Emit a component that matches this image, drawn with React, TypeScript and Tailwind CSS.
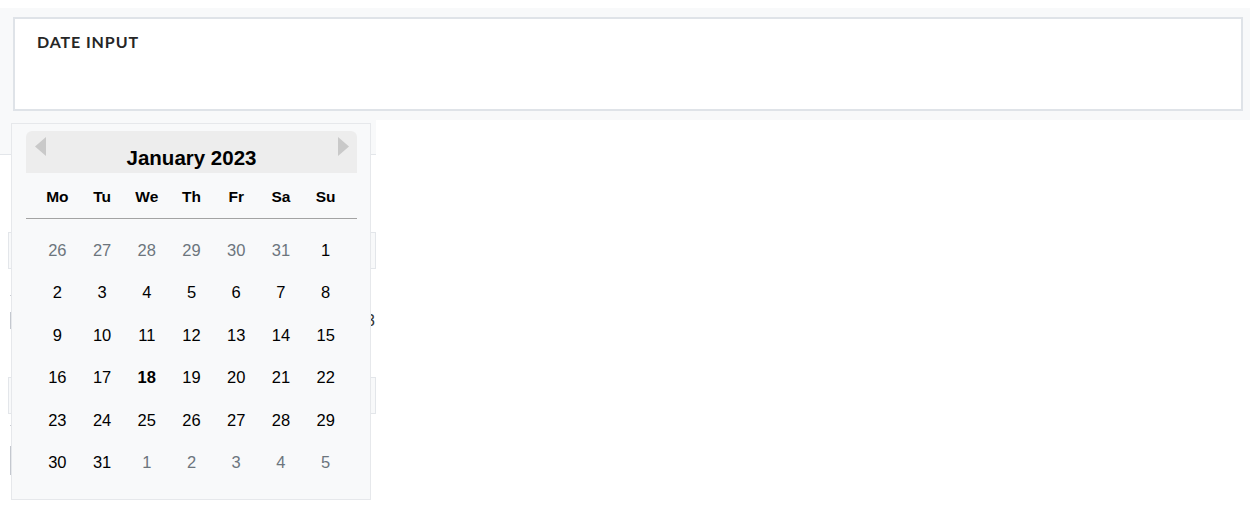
import React from "react";

const days: { d: number; muted?: boolean; today?: boolean }[] = [
  { d: 26, muted: true }, { d: 27, muted: true }, { d: 28, muted: true }, { d: 29, muted: true }, { d: 30, muted: true }, { d: 31, muted: true }, { d: 1 },
  { d: 2 }, { d: 3 }, { d: 4 }, { d: 5 }, { d: 6 }, { d: 7 }, { d: 8 },
  { d: 9 }, { d: 10 }, { d: 11 }, { d: 12 }, { d: 13 }, { d: 14 }, { d: 15 },
  { d: 16 }, { d: 17 }, { d: 18, today: true }, { d: 19 }, { d: 20 }, { d: 21 }, { d: 22 },
  { d: 23 }, { d: 24 }, { d: 25 }, { d: 26 }, { d: 27 }, { d: 28 }, { d: 29 },
  { d: 30 }, { d: 31 }, { d: 1, muted: true }, { d: 2, muted: true }, { d: 3, muted: true }, { d: 4, muted: true }, { d: 5, muted: true },
];

const weekdays = ["Mo", "Tu", "We", "Th", "Fr", "Sa", "Su"];

export default function App() {
  return (
    <div className="relative min-h-screen bg-white pt-2 font-['Liberation_Sans',Arial,sans-serif] text-black">
      {/* Top band */}
      <div className="bg-[#f8f9fa] pl-[13px] pr-[7px] py-[9px]">
        <div className="h-[94px] border-2 border-[#dfe3e8] bg-white pl-[22px] pt-[14px]">
          <h2 className="font-['Lato','Open_Sans',sans-serif] font-bold text-[16px] leading-[18px] tracking-[0.9px] text-[#262626]">
            DATE INPUT
          </h2>
        </div>
      </div>

      {/* Underlying content (mostly hidden by popup) */}
      <div className="w-[376px]">
        <div className="h-[35px] bg-[#f8f9fa] border-b border-[#e3e6ea]" />
        <div className="mt-[77px] ml-[8px] h-[37px] bg-[#f8f9fa] border border-[#e3e6ea]" />
        <div className="mt-[26px] ml-[10px] w-px h-[1px] bg-[#c8ccd2]" />
        <div className="mt-[16px] h-[17px] flex items-center justify-between pl-[10px] pr-[1px]">
          <div className="w-[2px] h-[17px] bg-[#c4c8cf]" />
          <span className="text-[16px] leading-[17px] text-[#333]">2023</span>
        </div>
        <div className="mt-[48px] ml-[8px] h-[37px] bg-[#f8f9fa] border border-[#e3e6ea]" />
        <div className="mt-[11px] ml-[10px] w-px h-[1px] bg-[#c8ccd2]" />
        <div className="mt-[20px] ml-[10px] w-[2px] h-[29px] bg-[#c4c8cf]" />
      </div>

      {/* Datepicker popup */}
      <div className="absolute left-[11px] top-[123px] w-[360px] h-[377px] border border-[#e6e8eb] bg-[#f8f9fa] pl-[14px] pr-[13px] pt-[7px]">
        <div className="relative h-[42px] bg-[#ededed] rounded-t-[6px]">
          <button className="absolute left-[9px] top-[6px]" aria-label="Previous month">
            <svg width="11" height="19" viewBox="0 0 11 19">
              <polygon points="11,0 11,19 0,9.5" fill="#c9c9c9" />
            </svg>
          </button>
          <button className="absolute right-[8px] top-[6px]" aria-label="Next month">
            <svg width="11" height="19" viewBox="0 0 11 19">
              <polygon points="0,0 0,19 11,9.5" fill="#c9c9c9" />
            </svg>
          </button>
          <div className="pt-[17px] text-center text-[20.5px] leading-[20px] font-bold">January 2023</div>
        </div>
        <div className="border-b border-[#a3a3a3] pt-[16px] pb-[14px]">
          <div className="mx-auto grid w-[313px] grid-cols-7 text-center text-[15.5px] leading-[15px] font-bold">
            {weekdays.map((w) => (
              <div key={w}>{w}</div>
            ))}
          </div>
        </div>
        <div className="mx-auto grid w-[313px] grid-cols-7 pt-[10px] text-[16.5px]">
          {days.map((c, i) => (
            <div
              key={i}
              className={
                "flex h-[42.5px] items-center justify-center " +
                (c.muted ? "text-[#6c757d]" : "text-black") +
                (c.today ? " font-bold" : "")
              }
            >
              {c.d}
            </div>
          ))}
        </div>
      </div>
    </div>
  );
}
